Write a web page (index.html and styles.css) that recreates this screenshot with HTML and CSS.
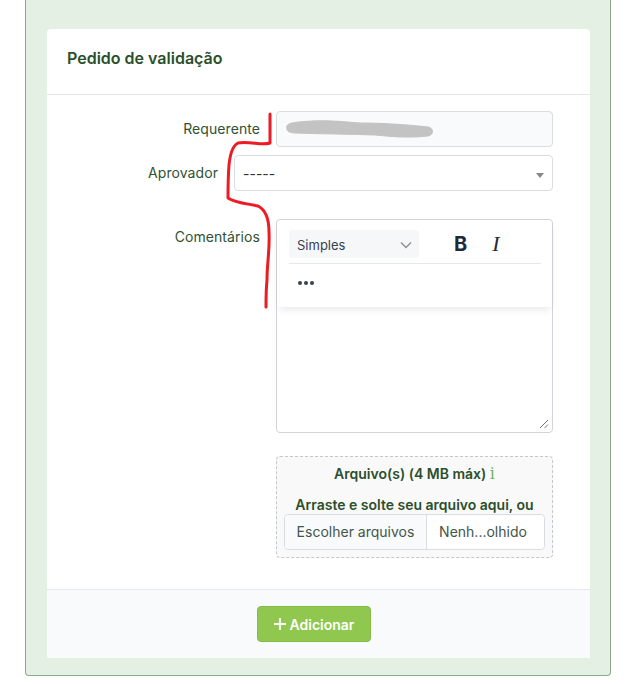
FILE: index.html
```html
<!DOCTYPE html>
<html lang="pt">
<head>
<meta charset="utf-8">
<title>Pedido de validação</title>
<link rel="stylesheet" href="styles.css">
</head>
<body>
<div class="panel">
  <section class="card">
    <header class="card-head"><h2>Pedido de validação</h2></header>
    <div class="card-body">
      <div class="row row-req">
        <label>Requerente</label>
        <div class="field readonly"></div>
      </div>
      <div class="row row-apr">
        <label>Aprovador</label>
        <div class="field select"><span>-----</span><i class="caret"></i></div>
      </div>
      <div class="row row-com">
        <label>Comentários</label>
        <div class="editor">
          <div class="toolbar">
            <div class="tools-top">
              <div class="format"><span>Simples</span>
                <svg width="14" height="14" viewBox="0 0 14 14"><path d="M2 4.500 7 9.500 12 4.500" fill="none" stroke="#8b9098" stroke-width="1.400"/></svg>
              </div>
              <b class="tool-b">B</b>
              <i class="tool-i">I</i>
            </div>
            <div class="tools-more"><span class="dot"></span><span class="dot"></span><span class="dot"></span></div>
          </div>
          <div class="edit-area">
            <svg class="grip" width="10" height="10" viewBox="0 0 10 10"><path d="M1 9 9 1M5.500 9 9 5.500" stroke="#777" stroke-width="1" fill="none"/></svg>
          </div>
        </div>
      </div>
      <div class="row row-file">
        <div class="drop">
          <div class="drop-title">Arquivo(s) (4 MB máx) <span class="info">i</span></div>
          <div class="drop-hint">Arraste e solte seu arquivo aqui, ou</div>
          <div class="file-input"><span class="file-btn">Escolher arquivos</span><span class="file-name">Nenh...olhido</span></div>
        </div>
      </div>
    </div>
    <footer class="card-foot">
      <button class="add" type="button">
        <svg width="12" height="12" viewBox="0 0 12 12"><path d="M6 0V12M0 6H12" stroke="#fff" stroke-width="1.800" fill="none"/></svg>
        Adicionar
      </button>
    </footer>
  </section>
</div>
<svg class="marks" width="637" height="684" viewBox="0 0 637 684">
  <path class="blur" d="M287 126C288 122 300 122 312 121C330 120 345 122 360 123C385 123 410 125 428 127C434 128 434 135 428 136C410 138 395 137 375 135C350 134 320 134 295 133C288 133 286 130 287 126Z"/>
  <path class="ink" d="M270 114V143C262 146 250 141 238 143C232 146 230 155 229 165C228 178 228 190 228 198C235 203 250 204 258 206C266 210 269 218 269 232C270 250 267 262 267 280C266 290 266 300 266 307"/>
</svg>
</body>
</html>
```
FILE: styles.css
```css
* { box-sizing: border-box; }
html, body { margin: 0; height: 684px; overflow: hidden; background: #fff; }
body { position: relative; font-family: Inter, "Liberation Sans", sans-serif; font-size: 14px; color: #2f5233; }

.panel {
  margin-left: 25px;
  width: 586px;
  height: 676px;
  padding: 29px 20px 0 21px;
  background: #e3f0e3;
  border: 1px solid #8aaa8a;
  border-top: 0;
  border-radius: 0 0 4px 4px;
}
.card {
  width: 543px;
  height: 629px;
  background: #fff;
  border-radius: 4px;
  display: flex;
  flex-direction: column;
}
.card-head {
  height: 66px;
  padding: 20px;
  border-bottom: 1px solid #e5e7eb;
}
.card-head h2 {
  margin: 0;
  font-size: 16px;
  line-height: 18px;
  font-weight: 600;
  color: #2b4f2b;
}
.card-body { flex: 1; padding: 16px 37px 0 0; }
.row { display: flex; justify-content: flex-end; gap: 16px; }
.row label { line-height: 36px; font-size: 14px; letter-spacing: 0.08px; color: #2f5233; }
.row-apr { margin-top: 8px; }
.row-com { margin-top: 28px; }
.row-file { margin-top: 23px; }

.field {
  height: 36px;
  border: 1px solid #d9dce1;
  border-radius: 4px;
}
.readonly { width: 277px; background: #f9fafb; }
.select {
  width: 319px;
  background: #fff;
  padding: 0 8px;
  display: flex;
  align-items: center;
  justify-content: space-between;
  color: #333;
}
.caret {
  width: 0;
  height: 0;
  border-left: 4px solid transparent;
  border-right: 4px solid transparent;
  border-top: 5px solid #888;
  margin-top: 4px;
}

.editor {
  width: 277px;
  height: 214px;
  border: 1px solid #d1d5db;
  border-radius: 4px;
  display: flex;
  flex-direction: column;
}
.toolbar {
  height: 87px;
  padding: 10px 11px 0 12px;
  box-shadow: 0 4px 8px -2px rgba(0, 0, 0, 0.1);
}
.tools-top {
  height: 34px;
  display: flex;
  align-items: flex-start;
  border-bottom: 1px solid #e5e7eb;
}
.format {
  width: 130px;
  height: 28px;
  padding: 1px 6px 0 8px;
  display: flex;
  align-items: center;
  justify-content: space-between;
  background: #f6f7f8;
  border-radius: 3px;
  font-size: 13px;
  color: #374151;
}
.tool-b {
  margin-left: 35px;
  font-size: 20px;
  line-height: 28px;
  font-weight: 700;
  color: #1f2937;
}
.tool-i {
  margin-left: 25px;
  font-family: "Liberation Serif", serif;
  font-size: 22px;
  line-height: 27px;
  color: #1f2937;
}
.tools-more { display: flex; gap: 2px; padding: 17px 0 0 9px; }
.dot { width: 4px; height: 4px; border-radius: 50%; background: #374151; }
.edit-area { flex: 1; position: relative; }
.grip { position: absolute; right: 3px; bottom: 3px; }

.drop {
  width: 277px;
  height: 102px;
  padding: 8px 7px 0;
  background: #f9f9f9;
  border: 1px dashed #c4c7cb;
  border-radius: 4px;
  text-align: center;
}
.drop-title { font-size: 14px; line-height: 18px; font-weight: 600; white-space: nowrap; color: #2b4f2b; }
.info { font-family: "DejaVu Serif", serif; font-size: 16px; line-height: 18px; font-weight: 400; color: #74b35f; }
.drop-hint { margin-top: 13px; font-size: 14px; line-height: 17px; font-weight: 600; color: #2b4f2b; white-space: nowrap; }
.file-input {
  height: 36px;
  margin-top: 1px;
  display: flex;
  background: #fff;
  border: 1px solid #d9dce1;
  border-radius: 4px;
  line-height: 34px;
  color: #43564a;
}
.file-btn { width: 142px; background: #f9fafb; border-right: 1px solid #d9dce1; border-radius: 4px 0 0 4px; }
.file-name { flex: 1; padding-right: 5px; }

.card-foot {
  height: 69px;
  padding-top: 16px;
  background: #f9fafb;
  border-top: 1px solid #e5e7eb;
  display: flex;
  justify-content: center;
  align-items: flex-start;
}
.add {
  width: 114px;
  height: 36px;
  padding: 0;
  margin-left: -9px;
  display: flex;
  align-items: center;
  justify-content: center;
  gap: 4px;
  background: #8fc74f;
  border: 1px solid #84bb47;
  border-radius: 4px;
  color: #fff;
  font: 600 14px Inter, "Liberation Sans", sans-serif;
}

.marks { position: absolute; left: 0; top: 0; pointer-events: none; }
.ink { fill: none; stroke: #ed1c24; stroke-width: 3; stroke-linejoin: round; stroke-linecap: round; }
.blur { fill: #c3c3c3; stroke: #c3c3c3; stroke-width: 1; }
```
